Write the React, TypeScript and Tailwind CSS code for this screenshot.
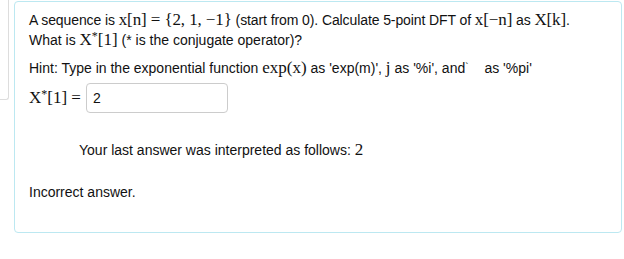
import React from "react";

const M = ({ children }: { children: React.ReactNode }) => (
  <span className="font-['Liberation_Serif',serif] text-[17px]">{children}</span>
);

const Star = () => <sup className="text-[12px] -top-[0.45em]">*</sup>;

const App = () => {
  return (
    <div className="w-[624px] h-[259px] bg-white flex items-start font-['Liberation_Sans',Arial,sans-serif] text-[14px] text-[#111]">
      {/* side panel edge */}
      <div className="w-[9px] h-[100px] border-r border-b border-[#ddd] rounded-br-[3px] shrink-0" />

      {/* question box */}
      <div className="ml-[5px] mt-[1px] w-[608px] h-[232px] border border-[#bce8f1] rounded-[4px] px-[14px] pt-[8px]">
        <p className="leading-[20px] tracking-[-0.1px]">
          A sequence is <M>x[n] = {"{"}2, 1, −1{"}"}</M> (start from 0). Calculate 5-point DFT of{" "}
          <M>x[−n]</M> as <M>X[k]</M>.
        </p>
        <p className="leading-[20px]">
          What is{" "}
          <M>
            X<Star />[1]
          </M>{" "}
          (* is the conjugate operator)?
        </p>
        <p className="leading-[20px] mt-[8px]">
          Hint: Type in the exponential function <M>exp(x)</M> as 'exp(m)', <M>j</M> as '%i', and
          <span className="text-[10px] align-top">`</span>
          <span className="inline-block w-[12px]" /> as '%pi'
        </p>

        {/* answer row */}
        <div className="flex items-center gap-[5px] mt-[5px]">
          <M>
            X<Star />[1] =
          </M>
          <div className="w-[142px] h-[30px] border border-[#ccc] rounded-[4px] flex items-center px-[6px]">
            2
          </div>
        </div>

        <p className="mt-[27px] ml-[50px] leading-[20px]">
          Your last answer was interpreted as follows: <M>2</M>
        </p>

        <p className="mt-[22px] leading-[20px]">Incorrect answer.</p>
      </div>
    </div>
  );
};

export default App;
